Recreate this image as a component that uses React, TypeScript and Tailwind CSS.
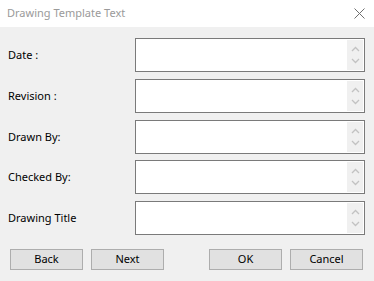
import React from 'react';

const fields = ['Date :', 'Revision :', 'Drawn By:', 'Checked By:', 'Drawing Title'];
const gaps = ['mt-0', 'mt-[7px]', 'mt-[7px]', 'mt-[6px]', 'mt-[7px]'];

function Spinner() {
  return (
    <div className="flex h-full w-[16px] flex-col items-center justify-between bg-[#f0f0f0] py-[6px]">
      <svg width="9" height="6" viewBox="0 0 9 6">
        <path d="M1 5 L4.5 1.5 L8 5" fill="none" stroke="#c2c2c2" strokeWidth="1.3" />
      </svg>
      <svg width="9" height="6" viewBox="0 0 9 6">
        <path d="M1 1 L4.5 4.5 L8 1" fill="none" stroke="#c2c2c2" strokeWidth="1.3" />
      </svg>
    </div>
  );
}

function Btn({ label, className }: { label: string; className?: string }) {
  return (
    <button
      className={`flex h-[21px] w-[73px] items-center justify-center border border-[#adadad] bg-[#e1e1e1] text-[11px] text-black ${className ?? ''}`}
    >
      {label}
    </button>
  );
}

export default function App() {
  return (
    <div
      className="flex h-[281px] w-[374px] flex-col bg-[#f0f0f0]"
      style={{ fontFamily: '"Noto Sans", "Open Sans", sans-serif' }}
    >
      {/* title bar */}
      <div className="flex h-[27px] items-center justify-between bg-white pl-[7px] pr-[9px]">
        <span className="text-[11px] text-[#9a9a9a]">Drawing Template Text</span>
        <svg width="11" height="11" viewBox="0 0 11 11">
          <path d="M0.5 0.5 L10.5 10.5 M10.5 0.5 L0.5 10.5" stroke="#6f6f6f" strokeWidth="1" />
        </svg>
      </div>

      <div className="flex flex-col pt-[11px]">
        {fields.map((f, i) => (
          <div key={f} className={`flex h-[34px] items-center ${gaps[i]}`}>
            <span className="w-[135px] pl-[8px] text-[11px] text-black">{f}</span>
            <div className="flex h-[34px] w-[230px] justify-end border border-[#7a7a7a] bg-white p-[1px]">
              <Spinner />
            </div>
          </div>
        ))}
      </div>

      <div className="mt-[14px] flex pl-[10px]">
        <Btn label="Back" />
        <Btn label="Next" className="ml-[8px]" />
        <Btn label="OK" className="ml-[45px]" />
        <Btn label="Cancel" className="ml-[8px]" />
      </div>
    </div>
  );
}
